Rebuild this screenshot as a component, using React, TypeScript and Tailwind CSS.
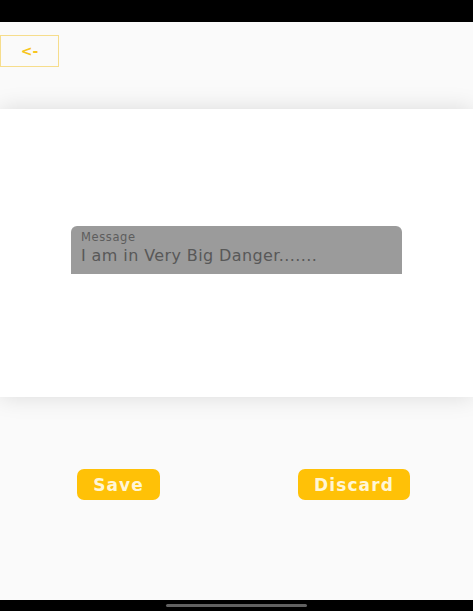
export default function App() {
  return (
    <div className="flex h-[611px] w-full flex-col overflow-hidden bg-[#fafafa] font-['DejaVu_Sans',sans-serif]">
      {/* status bar */}
      <div className="h-[22px] shrink-0 bg-black" />

      {/* header */}
      <div className="h-[87px] shrink-0 pt-[13px]">
        <button className="flex h-[32px] w-[59px] items-center justify-center border border-[#f6dd8c] bg-[#fafafa] text-[14px] font-bold text-[#f7c520]">
          &lt;-
        </button>
      </div>

      {/* card */}
      <div className="relative z-10 h-[288px] shrink-0 bg-white pt-[117px] shadow-[0_0_22px_rgba(0,0,0,0.13)]">
        <div className="ml-[71px] flex h-[48px] w-[331px] flex-col rounded-t-[6px] bg-[#9b9b9b] px-[10px] pt-[4px]">
          <span className="text-[11.5px] leading-[15px] tracking-[0.6px] text-[#5d5d5d]">Message</span>
          <span className="mt-[1px] text-[16px] leading-[20px] tracking-[0.4px] text-[#585858]">
            I am in Very Big Danger.......
          </span>
        </div>
      </div>

      {/* actions */}
      <div className="flex flex-1 items-start justify-between pl-[77px] pr-[63px] pt-[72px]">
        <button className="h-[31px] w-[83px] rounded-[7px] bg-[#ffc107] pt-[2px] text-[17px] font-bold tracking-[1.1px] text-[#fff6d6]">
          Save
        </button>
        <button className="h-[31px] w-[112px] rounded-[7px] bg-[#ffc107] pt-[2px] text-[17px] font-bold tracking-[1.1px] text-[#fff6d6]">
          Discard
        </button>
      </div>

      {/* nav bar */}
      <div className="flex h-[11px] shrink-0 items-center justify-center bg-black">
        <div className="h-[3px] w-[141px] rounded-full bg-[#616161]" />
      </div>
    </div>
  )
}
